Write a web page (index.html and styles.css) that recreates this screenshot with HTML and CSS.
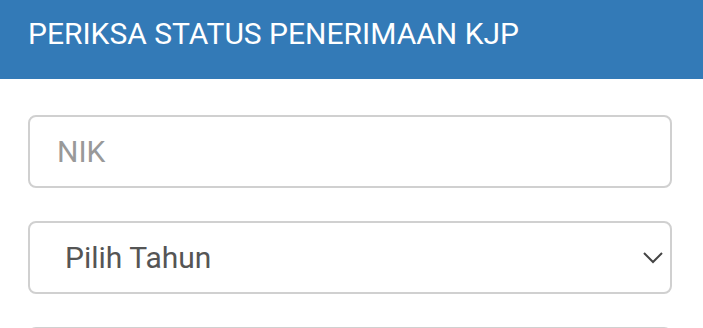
FILE: index.html
```html
<!DOCTYPE html>
<html lang="id">
<head>
<meta charset="utf-8">
<title>Periksa Status Penerimaan KJP</title>
<link rel="stylesheet" href="styles.css">
</head>
<body>
<header class="panel-heading">PERIKSA STATUS PENERIMAAN KJP</header>
<form class="panel-body">
  <input class="field" type="text" placeholder="NIK">
  <div class="select-wrap">
    <select class="field select">
      <option>Pilih Tahun</option>
    </select>
    <svg class="chevron" width="20" height="12" viewBox="0 0 20 12"><path d="M1 1 L10 10 L19 1" fill="none" stroke="#444" stroke-width="2"/></svg>
  </div>
  <input class="field" type="text" placeholder="">
</form>
</body>
</html>
```
FILE: styles.css
```css
html, body {
  margin: 0;
  padding: 0;
  background: #fff;
  font-family: Roboto, "Noto Sans", sans-serif;
  overflow: hidden;
}
.panel-heading {
  background: #337ab7;
  color: #fff;
  font-size: 30px;
  line-height: 35px;
  height: 79px;
  box-sizing: border-box;
  padding: 16px 0 0 28px;
}
.panel-body {
  display: flex;
  flex-direction: column;
  gap: 33px;
  padding: 36px 0 0 28px;
}
.field {
  box-sizing: border-box;
  width: 644px;
  height: 73px;
  border: 2px solid #d0d0d0;
  border-radius: 8px;
  background: #fff;
  font-family: Roboto, "Noto Sans", sans-serif;
  font-size: 30px;
  color: #555;
  padding: 0 0 0 27px;
  margin: 0;
  outline: none;
}
.field::placeholder {
  color: #999;
}
.select-wrap {
  position: relative;
  width: 644px;
}
.select {
  appearance: none;
  -webkit-appearance: none;
  padding-left: 35px;
}
.chevron {
  position: absolute;
  left: 615px;
  top: 31px;
}
```
